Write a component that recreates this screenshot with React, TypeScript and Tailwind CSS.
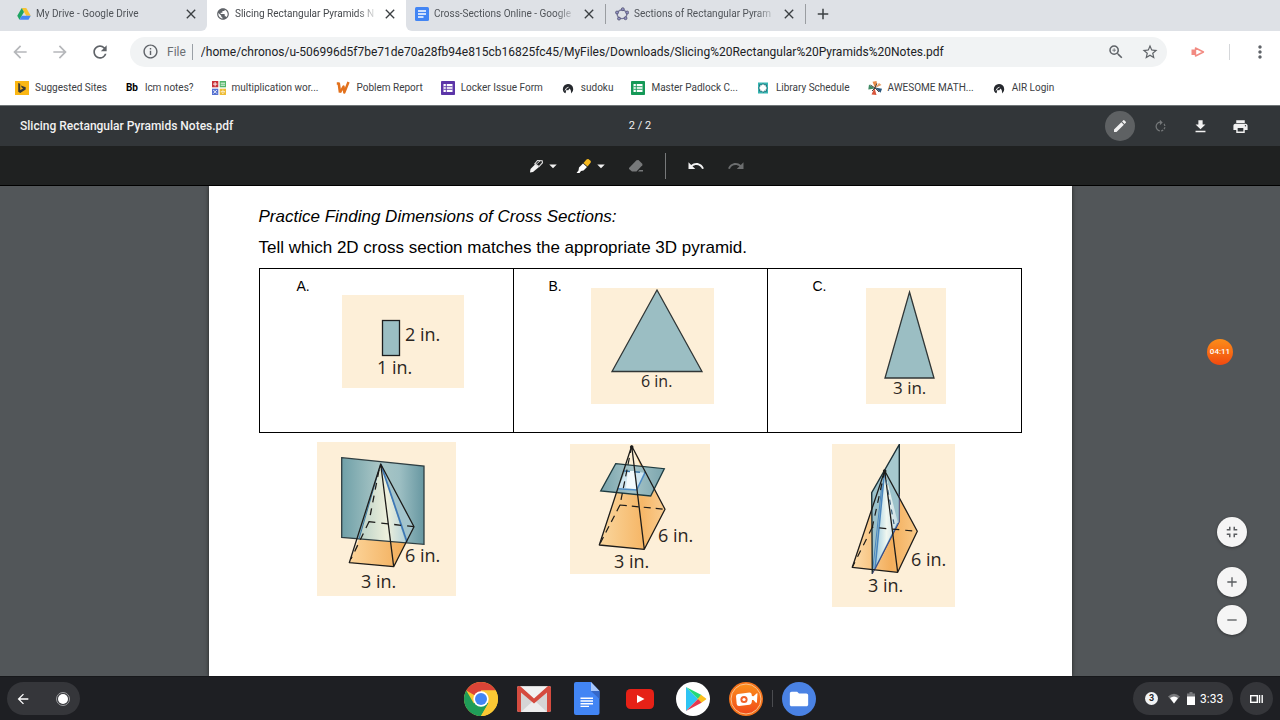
import React from 'react';
import {
  MdAdd,
  MdArrowBack,
  MdArrowDropDown,
  MdArrowForward,
  MdClose,
  MdEdit,
  MdFileDownload,
  MdFolder,
  MdFullscreenExit,
  MdInfoOutline,
  MdMoreVert,
  MdPrint,
  MdPublic,
  MdRedo,
  MdRefresh,
  MdRemove,
  MdRotateRight,
  MdStarBorder,
  MdUndo,
  MdZoomIn,
} from 'react-icons/md';

/* ---------- small logos ---------- */

const DriveLogo = () => (
  <svg className="w-3.5 h-3.5" viewBox="0 0 28 26">
    <path d="M9.5 1h9l9 15.500h-9z" fill="#f7c332" />
    <path d="M9.500 1 0.500 16.500l4.500 8L14 8.800z" fill="#1fa463" />
    <path d="M9.500 16.500h18l-4.500 8H5z" fill="#4687f4" />
  </svg>
);

const DocsLogo = () => (
  <svg className="w-3.5 h-3.5" viewBox="0 0 14 14">
    <rect width="14" height="14" rx="1.500" fill="#4285f4" />
    <path d="M3 4h8M3 7h8M3 10h5.500" stroke="#fff" strokeWidth="1.500" />
  </svg>
);

const GeogebraLogo = () => (
  <svg className="w-3.5 h-3.5" viewBox="0 0 14 14">
    <ellipse cx="7" cy="7.300" rx="4.800" ry="4.300" fill="none" stroke="#77779b" strokeWidth="1.400" />
    <g fill="#8f8fc0" stroke="#4a4a68" strokeWidth="0.700">
      <circle cx="7.800" cy="2.200" r="1.500" />
      <circle cx="12.200" cy="5.500" r="1.500" />
      <circle cx="10.500" cy="11.200" r="1.500" />
      <circle cx="4" cy="11.600" r="1.500" />
      <circle cx="2" cy="5.500" r="1.500" />
    </g>
  </svg>
);

const BingLogo = () => (
  <svg className="w-3.5 h-3.5" viewBox="0 0 14 14">
    <rect width="14" height="14" fill="#fbb713" />
    <path d="M3.200 2l2 .8v6.200l3-1.600-1.500-.8-.8-2 4.800 1.700v2.300L5.200 12l-2-1.300z" fill="#3b3a35" />
  </svg>
);

const OperationsLogo = () => (
  <svg className="w-3.5 h-3.5" viewBox="0 0 14 14">
    <rect width="6.300" height="6.300" fill="#c8323a" />
    <rect x="7.700" width="6.300" height="6.300" fill="#52b46a" />
    <rect y="7.700" width="6.300" height="6.300" fill="#5570d0" />
    <rect x="7.700" y="7.700" width="6.300" height="6.300" fill="#eebc35" />
    <path d="M3.100 1v4.300M1 3.100h4.300M8.700 2.200h4.300M8.700 4.200h4.300M1.300 9l3.600 3.600M4.900 9l-3.600 3.600M8.700 10.800h4.300M10.400 9.200h1M10.400 12.500h1" stroke="#fff" strokeWidth="0.900" />
  </svg>
);

const WLogo = () => (
  <svg className="w-3.5 h-3.5" viewBox="0 0 14 14" fill="none" stroke="#e2711d" strokeLinejoin="round">
    <path d="M.8 2.500h2L4 11.500" strokeWidth="2.600" />
    <path d="M4 11.500 7.500 5.500l.8 6L12.500 1" strokeWidth="2.400" />
  </svg>
);

const ListLogo = ({ color }: { color: string }) => (
  <svg className="w-3.5 h-3.5" viewBox="0 0 14 14">
    <rect width="14" height="14" rx="0.800" fill={color} />
    <rect x="2.500" y="3" width="9" height="8" fill="#fff" />
    <path d="M2.500 5.700h9M2.500 8.300h9M5.300 3v8" stroke={color} strokeWidth="0.900" />
  </svg>
);

const ArchLogo = () => (
  <svg className="w-3.5 h-3.5" viewBox="0 0 14 14">
    <path d="M3.300 11.800A5.200 5.200 0 1 1 10.900 11.600L10 12.500Q10.500 9 8.500 7.500L7 9.500 5.500 8.500 4.500 12.300z" fill="#26292e" />
    <path d="M4 9.500Q5 6.500 7.500 6.200" stroke="#fff" strokeWidth="0.900" fill="none" />
  </svg>
);

const LibraryLogo = () => (
  <svg className="w-3.5 h-3.5" viewBox="0 0 14 14">
    <rect x="2" y="1.500" width="10" height="11" fill="#35b5b2" />
    <path d="M7 2.500 8.500 4l2-.2-.2 2L11.500 7l-1.200 1.300.2 2-2-.2L7 11.500 5.500 10l-2 .2.200-2L2.500 7l1.200-1.300-.2-2 2 .3z" fill="#fff" stroke="#12656d" strokeWidth="0.900" />
  </svg>
);

const PinwheelLogo = () => (
  <svg className="w-3.5 h-3.5" viewBox="0 0 14 14">
    <path d="M7 7 4.500.8 8.500 0 9 3z" fill="#e88b4b" />
    <path d="M7 7l4-5 2.500 2z" fill="#e9a26c" />
    <path d="M7 6.500l7 1.200-1.500 4z" fill="#29567c" />
    <path d="M6.500 7l2 7-5-.5z" fill="#d8553b" />
    <path d="M7 7.500.3 8.500 1 3.500z" fill="#3f8a64" />
    <path d="M7 7 2.500 4M7 7l4 4M7 7l1.800-4.500M7 7l-3 3" stroke="#333" strokeWidth="0.900" />
  </svg>
);

/* ---------- browser chrome ---------- */

interface TabProps {
  icon: React.ReactNode;
  title: string;
  active?: boolean;
}

const Tab: React.FC<TabProps> = ({ icon, title, active }) => (
  <div className={`flex items-center flex-1 max-w-[199px] min-w-0 px-2 pb-[3px] ${active ? 'bg-white' : ''}`}>
    <span className="w-4 flex justify-center shrink-0">{icon}</span>
    <button
      className={`flex-1 min-w-0 ml-1 mr-1 overflow-hidden whitespace-nowrap text-left text-[10px] leading-4 mask-r-from-85% ${
        active ? 'text-[#45484c]' : 'text-[#505459]'
      }`}
    >
      {title}
    </button>
    <button aria-label="Close tab" className="shrink-0 text-[#3c4043]">
      <MdClose size={16} />
    </button>
  </div>
);

const TabStrip = () => (
  <div className="flex h-[31px] bg-white shrink-0">
    <div className="flex bg-[#dee1e6] rounded-br-md pl-2 flex-1 max-w-[207px]">
      <Tab icon={<DriveLogo />} title="My Drive - Google Drive" />
    </div>
    <Tab active icon={<MdPublic size={14} className="text-[#5f6368]" />} title="Slicing Rectangular Pyramids N" />
    <div className="flex flex-[4] bg-[#dee1e6] rounded-bl-md">
      <Tab icon={<DocsLogo />} title="Cross-Sections Online - Google" />
      <span className="w-px h-5 mt-1 bg-[#9a9da1]" />
      <Tab icon={<GeogebraLogo />} title="Sections of Rectangular Pyram" />
      <span className="w-px h-5 mt-1 bg-[#9a9da1]" />
      <button aria-label="New tab" className="px-2 pb-1 text-[#3c4043]">
        <MdAdd size={18} />
      </button>
    </div>
  </div>
);

const AddressBar = () => (
  <div className="flex items-center h-[41px] shrink-0 bg-white px-2.5 text-[#5f6368]">
    <div className="flex gap-5 mr-5">
      <button aria-label="Back" className="text-[#b5b7ba]"><MdArrowBack size={20} /></button>
      <button aria-label="Forward" className="text-[#b5b7ba]"><MdArrowForward size={20} /></button>
      <button aria-label="Reload"><MdRefresh size={20} /></button>
    </div>
    <div className="flex items-center flex-1 min-w-0 h-[30px] rounded-full bg-[#f1f3f4] pl-3 pr-2">
      <MdInfoOutline size={17} className="shrink-0" />
      <span className="ml-2 text-xs text-[#6b6f73]">File</span>
      <span className="w-px h-4 ml-1.5 mr-2 bg-[#9aa0a6]" />
      <input
        type="text"
        aria-label="Address"
        className="flex-1 min-w-0 bg-transparent text-xs text-[#202124] outline-none"
        defaultValue="/home/chronos/u-506996d5f7be71de70a28fb94e815cb16825fc45/MyFiles/Downloads/Slicing%20Rectangular%20Pyramids%20Notes.pdf"
      />
      <button aria-label="Zoom" className="ml-4"><MdZoomIn size={18} /></button>
      <button aria-label="Bookmark this page" className="ml-4"><MdStarBorder size={18} /></button>
    </div>
    <button aria-label="Screen recorder" className="ml-6">
      <svg width="14" height="14" viewBox="0 0 14 14" fill="none" stroke="#f28b82">
        <rect x="1" y="5" width="2.500" height="4.500" fill="#f28b82" />
        <path d="M4.500 3 12.500 7 4.500 11z" strokeWidth="1.400" strokeLinejoin="round" />
      </svg>
    </button>
    <span className="w-px h-4 ml-6 mr-5 bg-[#d5d7da]" />
    <button aria-label="Menu"><MdMoreVert size={20} /></button>
  </div>
);

const bookmarks = [
  { label: 'Suggested Sites', icon: <BingLogo /> },
  { label: 'lcm notes?', icon: <b className="text-[10px] leading-none text-black">Bb</b> },
  { label: 'multiplication wor...', icon: <OperationsLogo /> },
  { label: 'Poblem Report', icon: <WLogo /> },
  { label: 'Locker Issue Form', icon: <ListLogo color="#5c35a8" /> },
  { label: 'sudoku', icon: <ArchLogo /> },
  { label: 'Master Padlock C...', icon: <ListLogo color="#159957" /> },
  { label: 'Library Schedule', icon: <LibraryLogo /> },
  { label: 'AWESOME MATH...', icon: <PinwheelLogo /> },
  { label: 'AIR Login', icon: <ArchLogo /> },
];

const BookmarksBar = () => (
  <nav className="flex items-center gap-[18px] h-[33px] shrink-0 bg-white pl-[15px] pb-0.5 overflow-hidden">
    {bookmarks.map((b) => (
      <a key={b.label} href="#" className="flex items-center gap-1.5 whitespace-nowrap text-[10px] leading-4 text-[#3c4043]">
        <span className="w-3.5 flex justify-center">{b.icon}</span>
        {b.label}
      </a>
    ))}
  </nav>
);

/* ---------- PDF viewer ---------- */

const headerButton = 'w-10 h-[30px] flex items-center justify-center';

const PdfHeader = () => (
  <header className="grid grid-cols-3 items-center h-[41px] shrink-0 bg-[#323639] border-t border-[#6f7577] px-5 text-[#f1f1f1]">
    <h1 className="text-xs font-medium whitespace-nowrap">Slicing Rectangular Pyramids Notes.pdf</h1>
    <span className="text-[11px] text-center">2 / 2</span>
    <div className="flex items-center justify-end">
      <button aria-label="Annotate" className={headerButton}>
        <span className="w-[30px] h-[30px] rounded-full bg-[#5e6163] flex items-center justify-center">
          <MdEdit size={16} />
        </span>
      </button>
      <button aria-label="Rotate" className={`${headerButton} text-[#75787a]`}><MdRotateRight size={15} /></button>
      <button aria-label="Download" className={headerButton}><MdFileDownload size={17} /></button>
      <button aria-label="Print" className={headerButton}><MdPrint size={17} /></button>
    </div>
  </header>
);

const AnnotationBar = () => (
  <div className="flex items-center justify-center h-10 shrink-0 bg-[#1f2121] border-b border-black pr-1.5 text-[#f1f1f1]">
    <button aria-label="Pen" className="flex items-center">
      <svg width="15" height="14" viewBox="0 0 15 14">
        <path d="M1 13.500 1.500 10l5-5 3.500 3-6 5z" fill="#f4f4f4" />
        <path d="M5.800 4.800 8.500 1.500l4.700.2.300 2L10 7.500z" fill="#1f2121" stroke="#ddd" strokeWidth="1.100" />
        <path d="M7 5.500l4-3.500" stroke="#ddd" strokeWidth="0.900" />
      </svg>
      <MdArrowDropDown size={18} />
    </button>
    <button aria-label="Highlighter" className="flex items-center ml-3.5">
      <svg width="16" height="16" viewBox="0 0 16 16">
        <path d="M7.500 5 10.500 1.500q.8-.8 1.800-.5l2.200 1.800q.8.900.100 1.900L11.500 8.500z" fill="#f5b921" />
        <path d="M7 5.600 11 9 7.500 12.500 5 13 3.500 15H.5l2-2.500L3 9.500z" fill="#fff" />
      </svg>
      <MdArrowDropDown size={18} />
    </button>
    <button aria-label="Eraser" className="ml-[18px]">
      <svg width="16" height="16" viewBox="0 0 16 16" fill="#77797a">
        <path d="M1 10 8.500 2.200 10.500 2l4 4-.2 1.300L8.500 13.500H4L1 11z" />
        <path d="M10 13.500 11.500 12h3.500v1.500z" />
      </svg>
    </button>
    <span className="w-px h-[26px] mx-[21px] bg-[#77797a]" />
    <button aria-label="Undo"><MdUndo size={18} /></button>
    <button aria-label="Redo" className="ml-[22px] text-[#6c6e6f]"><MdRedo size={18} /></button>
  </div>
);

const labelClass = "font-['Open_Sans',sans-serif] text-[18px] fill-[#2b2622]";

const RectangleFigure = () => (
  <svg width="122" height="93" viewBox="0 0 122 93" className="bg-[#fdefd8]">
    <rect x="40.500" y="25.500" width="17" height="35" fill="#9bbec3" stroke="#1d1d1d" strokeWidth="1.300" />
    <text x="63" y="46" className={labelClass}>2 in.</text>
    <text x="35" y="79" className={labelClass}>1 in.</text>
  </svg>
);

const WideTriangleFigure = () => (
  <svg width="123" height="116" viewBox="0 0 123 116" className="bg-[#fdefd8]">
    <path d="M66 2 111 83.500H21z" fill="#9bbec3" stroke="#303636" strokeWidth="1.300" />
    <text x="50" y="99" className="font-['Open_Sans',sans-serif] text-[16px] fill-[#2b2622]">6 in.</text>
  </svg>
);

const NarrowTriangleFigure = () => (
  <svg width="80" height="116" viewBox="0 0 80 116" className="bg-[#fdefd8]">
    <path d="M43.500 4 68 90H19z" fill="#9bbec3" stroke="#303636" strokeWidth="1.300" />
    <text x="27" y="106" className="font-['Open_Sans',sans-serif] text-[17px] fill-[#2b2622]">3 in.</text>
  </svg>
);

// Plane parallel to the front edge, through the apex
const VerticalSlicePyramid = () => (
  <svg width="139" height="154" viewBox="0 0 139 154" className="bg-[#fdefd8]">
    <defs>
      <linearGradient id="plane1">
        <stop offset="0" stopColor="#6fa0a8" />
        <stop offset="0.450" stopColor="#a9c6c6" />
        <stop offset="0.700" stopColor="#9dbfc3" />
        <stop offset="1" stopColor="#6797a1" />
      </linearGradient>
      <linearGradient id="orange1">
        <stop offset="0" stopColor="#fcd59b" />
        <stop offset="1" stopColor="#f2ac58" />
      </linearGradient>
      <linearGradient id="pale1">
        <stop offset="0" stopColor="#b9d0c6" />
        <stop offset="0.600" stopColor="#eef0dc" />
        <stop offset="1" stopColor="#b5d2da" />
      </linearGradient>
    </defs>
    <path d="M24.700 15.700 107 24v78.300L24.700 95.300z" fill="url(#plane1)" />
    <path d="M63.700 22 42 97l47 4z" fill="url(#pale1)" />
    <path d="M63.700 22 89 101l8-16z" fill="#a3c4cc" />
    <path d="M42 97 32.300 120.700l44.400 4L89 101z" fill="url(#orange1)" />
    <path d="M24.700 15.700 107 24v78.300L24.700 95.300z" fill="none" stroke="#2f3e42" strokeWidth="1.300" />
    <path d="M63.700 22 90 100" stroke="#3d77b5" strokeWidth="1.700" />
    <path d="M63.700 22 42 97" stroke="#3b76a0" strokeWidth="1" />
    <path d="M63.700 22 32.300 120.700l44.400 4L97 84.700zL76.700 124.700" fill="none" stroke="#1d1c1a" strokeWidth="1.300" strokeLinejoin="round" />
    <path d="M62 28 52 79.700 97 84.700M52 79.700 34 117" fill="none" stroke="#1d1c1a" strokeWidth="1.300" strokeDasharray="7 6" />
    <text x="88" y="120" className={labelClass}>6 in.</text>
    <text x="44" y="146" className={labelClass}>3 in.</text>
  </svg>
);

// Plane parallel to the base
const HorizontalSlicePyramid = () => (
  <svg width="140" height="130" viewBox="0 0 140 130" className="bg-[#fdefd8]">
    <defs>
      <linearGradient id="plane2">
        <stop offset="0" stopColor="#7ba5ad" />
        <stop offset="0.500" stopColor="#a4c3c7" />
        <stop offset="1" stopColor="#7ba5ad" />
      </linearGradient>
      <linearGradient id="orange2">
        <stop offset="0" stopColor="#fad79f" />
        <stop offset="0.650" stopColor="#f6b768" />
        <stop offset="1" stopColor="#f9cd91" />
      </linearGradient>
    </defs>
    <path d="M61.700 2 29.300 101l45 4.300L95 65.300z" fill="url(#orange2)" />
    <path d="M61.700 2 54 22l17 1z" fill="#fdf0d4" />
    <path d="M45.700 19.700 94.300 24.700 80.700 52l-50-5z" fill="url(#plane2)" stroke="#1e3b40" strokeWidth="1.300" />
    <path d="M55.700 26.700 75 28.700 66.700 46 48 44.700z" fill="#cfe6f0" />
    <path d="M58 27 56 44l10 1-2-18z" fill="#f3fafc" />
    <path d="M75 28.700 66.700 46 48 44.700" fill="none" stroke="#4f8cc4" strokeWidth="1.600" />
    <path d="M54 27 76 28.700" stroke="#3c77a8" strokeWidth="1.400" strokeDasharray="6 4" />
    <path d="M61.700 2 29.300 101l45 4.300L95 65.300zL74.300 105.300" fill="none" stroke="#1d1c1a" strokeWidth="1.300" strokeLinejoin="round" />
    <path d="M61.700 2 50 61l45 4.300M50 61 29.300 101" fill="none" stroke="#1d1c1a" strokeWidth="1.200" strokeDasharray="7 5" />
    <circle cx="61.700" cy="3" r="1.800" fill="#1d1c1a" />
    <text x="88" y="98" className={labelClass}>6 in.</text>
    <text x="44" y="124" className={labelClass}>3 in.</text>
  </svg>
);

// Plane along the length of the base, through the apex
const DepthSlicePyramid = () => (
  <svg width="123" height="163" viewBox="0 0 123 163" className="bg-[#fdefd8]">
    <defs>
      <linearGradient id="orange3">
        <stop offset="0" stopColor="#fdddac" />
        <stop offset="0.600" stopColor="#f3ae5c" />
        <stop offset="1" stopColor="#f9c987" />
      </linearGradient>
      <linearGradient id="pale3">
        <stop offset="0" stopColor="#9ccbe0" />
        <stop offset="0.500" stopColor="#f0f7f0" />
        <stop offset="1" stopColor="#c5dbe4" />
      </linearGradient>
    </defs>
    <path d="M52.700 26.700 20.300 123.300l45.400 5L85.300 87.300z" fill="url(#orange3)" />
    <path d="M67.300.500v77.200L40.300 130 39.700 48.700z" fill="#9cc2cb" />
    <path d="M67.300.500 53 26.700l14.300 24z" fill="#a6c9cf" />
    <path d="M52.700 26.700 43 125 66 79z" fill="url(#pale3)" />
    <path d="M52.700 26.700 43 125 66 79" fill="none" stroke="#4a86be" strokeWidth="1.500" />
    <path d="M50 40 40.500 128" stroke="#4a86be" strokeWidth="1" />
    <path d="M67.300 52V.500L39.700 48.700 40.300 130" fill="none" stroke="#1e3238" strokeWidth="1.400" />
    <path d="M67.300 50v28L40.300 130" fill="none" stroke="#447" strokeWidth="1" />
    <path d="M52.700 26.700 20.300 123.300l45.400 5L85.300 87.300zL65.700 128.300" fill="none" stroke="#1d1c1a" strokeWidth="1.300" strokeLinejoin="round" />
    <path d="M52.700 26.700 40.300 83.300l45 4M40.300 83.300l-20 40" fill="none" stroke="#1d1c1a" strokeWidth="1.200" strokeDasharray="7 6" />
    <path d="M54 36 62 80" stroke="#3b5f7c" strokeWidth="1.200" strokeDasharray="5 5" />
    <circle cx="52.700" cy="27" r="1.800" fill="#1d1c1a" />
    <text x="79" y="122" className={labelClass}>6 in.</text>
    <text x="36" y="148" className={labelClass}>3 in.</text>
  </svg>
);

const Page = () => (
  <article className="w-full max-w-[863px] mx-auto min-h-full bg-white px-[50px] pt-5 font-['Liberation_Sans',Arial,sans-serif] text-[17px] leading-[22px] text-black shadow-[0_0_4px_#222]">
    <h2 className="italic">Practice Finding Dimensions of Cross Sections:</h2>
    <p className="mt-[9px]">Tell which 2D cross section matches the appropriate 3D pyramid.</p>
    <table className="w-full mt-[9px] table-fixed border-collapse text-[14px] leading-5">
      <tbody>
        <tr className="h-[164px] align-top">
          <td className="border border-black pl-[37px] pt-[7px]">
            <div className="flex gap-8">
              <span>A.</span>
              <div className="pt-[19px]"><RectangleFigure /></div>
            </div>
          </td>
          <td className="border border-black pl-[35px] pt-[7px]">
            <div className="flex gap-[29px]">
              <span>B.</span>
              <div className="pt-3"><WideTriangleFigure /></div>
            </div>
          </td>
          <td className="border border-black pl-[45px] pt-[7px]">
            <div className="flex gap-[39px]">
              <span>C.</span>
              <div className="pt-3"><NarrowTriangleFigure /></div>
            </div>
          </td>
        </tr>
      </tbody>
    </table>
    <div className="grid grid-cols-3 items-start pt-[9px]">
      <div className="pl-[58px]"><VerticalSlicePyramid /></div>
      <div className="pl-[57px] pt-0.5"><HorizontalSlicePyramid /></div>
      <div className="pl-[65px] pt-0.5"><DepthSlicePyramid /></div>
    </div>
  </article>
);

const zoomButton =
  'w-[30px] h-[30px] rounded-full bg-[#f5f5f5] text-[#5a5d60] flex items-center justify-center shadow-[0_1px_3px_rgba(0,0,0,0.4)]';

const Viewer = () => (
  <main className="relative flex-1 min-h-0 overflow-hidden bg-[#525659]">
    <Page />
    <div className="absolute top-[153px] right-[47px] w-[26px] h-[26px] rounded-full bg-gradient-to-b from-[#fb8c1a] to-[#f1480f] flex items-center justify-center text-[8px] font-medium text-white">
      04:11
    </div>
    <div className="absolute right-[33px] bottom-[41px] flex flex-col">
      <button aria-label="Fit to page" className={zoomButton}><MdFullscreenExit size={18} /></button>
      <button aria-label="Zoom in" className={`${zoomButton} mt-5`}><MdAdd size={16} /></button>
      <button aria-label="Zoom out" className={`${zoomButton} mt-2`}><MdRemove size={16} /></button>
    </div>
  </main>
);

/* ---------- shelf ---------- */

const ChromeApp = () => (
  <svg width="34" height="34" viewBox="0 0 34 34">
    <circle cx="17" cy="17" r="17" fill="#fbc834" />
    <path d="M17 17 2.300 8.500A17 17 0 0 1 31.700 8.500H17z" fill="#db4437" />
    <path d="M2.300 8.500A17 17 0 0 0 17 34l7.400-12.700L17 17 9.700 21.300z" fill="#1f9d58" />
    <path d="M17 8.500h14.700A17 17 0 0 1 17 34l7.400-12.700z" fill="#fbc834" />
    <circle cx="17" cy="17" r="7.700" fill="#fff" />
    <circle cx="17" cy="17" r="6" fill="#4285f4" />
  </svg>
);

const GmailApp = () => (
  <svg width="34" height="26" viewBox="0 0 34 26">
    <rect width="34" height="26" rx="2" fill="#d5d5d5" />
    <path d="M4 26 17 14l13 12z" fill="#ededed" />
    <path d="M4 1h26L17 13z" fill="#f1f1f1" />
    <path d="M0 2q0-2 2-2h1l14 12.500L31 0h1q2 0 2 2v22q0 2-2 2h-2V6.500L17 17.500 4 6.500V26H2q-2 0-2-2z" fill="#d54b3f" />
  </svg>
);

const DocsApp = () => (
  <svg width="26" height="33" viewBox="0 0 26 33">
    <path d="M2 0h15l8.500 9v22q0 2-2 2H2q-2 0-2-2V2q0-2 2-2z" fill="#4285f4" />
    <path d="M17 0l8.500 9H17z" fill="#a8c7fa" />
    <path d="M17 9h8.500v8z" fill="#3568c8" />
    <path d="M6.500 16.300h12.500M6.500 19h12.500M6.500 21.700h12.500M6.500 24.400h8.500" stroke="#fff" strokeWidth="1.400" />
  </svg>
);

const YoutubeApp = () => (
  <svg width="28" height="20" viewBox="0 0 28 20">
    <rect width="28" height="20" rx="4.500" fill="#e62117" />
    <path d="M11 6l7.500 4L11 14z" fill="#fff" />
  </svg>
);

const PlayApp = () => (
  <svg width="34" height="34" viewBox="0 0 34 34">
    <circle cx="17" cy="17" r="17" fill="#fff" />
    <path d="M10 5v24l12-12z" fill="#2ec4f3" />
    <path d="M10 5 22 17l3.500-4z" fill="#25d978" />
    <path d="M25 12.700 21.500 17l3.500 4 5-3.500q.7-.6 0-1z" fill="#fbbf1e" />
    <path d="M10 29l12-12 3.500 3.800z" fill="#e5394f" />
  </svg>
);

const RecorderApp = () => (
  <svg width="34" height="34" viewBox="0 0 34 34">
    <defs>
      <linearGradient id="recorder" x2="0" y2="1">
        <stop offset="0" stopColor="#fb8f1c" />
        <stop offset="1" stopColor="#f14a1a" />
      </linearGradient>
    </defs>
    <circle cx="17" cy="17" r="17" fill="#f4731c" />
    <circle cx="17" cy="17" r="15" fill="url(#recorder)" stroke="#fbc08a" strokeWidth="1" />
    <path d="M9 12l11.500-1.500q2 0 2.200 2l.2 1.500 1.600.3 3-2.800 1-.2-.6 9.500-1-.1-2.500-2.700-1.400.1-.3 2.400q-.3 2-2.200 2.200L10 24q-2 .1-2.300-1.900L7 14.200Q7 12.200 9 12z" fill="#fff" />
    <circle cx="15" cy="17.500" r="3.600" fill="#f2622a" />
    <circle cx="15" cy="17.500" r="1.600" fill="#fff" />
  </svg>
);

const FilesApp = () => (
  <span className="w-[34px] h-[34px] rounded-full bg-[#4a82e4] flex items-center justify-center text-white">
    <MdFolder size={22} />
  </span>
);

const apps = [
  { name: 'Chrome', icon: <ChromeApp /> },
  { name: 'Gmail', icon: <GmailApp /> },
  { name: 'Docs', icon: <DocsApp /> },
  { name: 'YouTube', icon: <YoutubeApp /> },
  { name: 'Play Store', icon: <PlayApp /> },
  { name: 'Screen Recorder', icon: <RecorderApp /> },
  { name: 'Files', icon: <FilesApp /> },
];

const Shelf = () => (
  <footer className="grid grid-cols-[1fr_auto_1fr] items-center h-11 shrink-0 bg-[#1e1f23] border-t border-[#17181b] px-[7px] text-white">
    <div className="flex items-center justify-between w-[73px] h-[33px] rounded-full bg-[#35363a] pl-2 pr-2.5">
      <button aria-label="Back"><MdArrowBack size={16} /></button>
      <button aria-label="Launcher" className="w-3.5 h-3.5 rounded-full border border-[#9a9b9e] flex items-center justify-center">
        <span className="w-2.5 h-2.5 rounded-full bg-white" />
      </button>
    </div>
    <div className="flex items-center gap-[19px]">
      {apps.map((app) => (
        <React.Fragment key={app.name}>
          {app.name === 'Files' && <span className="w-px h-[17px] -mx-2.5 bg-[#4b4c50]" />}
          <button aria-label={app.name} className="w-[34px] h-[34px] flex items-center justify-center">{app.icon}</button>
        </React.Fragment>
      ))}
    </div>
    <div className="flex items-center justify-end gap-[7px]">
      <button className="flex items-center w-[100px] h-[33px] rounded-full bg-[#35363a] pl-3 text-xs">
        <span className="w-[13px] h-[13px] rounded-full bg-[#f1f3f4] text-[#26272b] text-[9px] leading-[13px] font-bold">3</span>
        <svg className="ml-2.5" width="12" height="11" viewBox="0 0 12 11">
          <path d="M0 3.500Q6-2 12 3.500L6 10.500z" fill="#78797c" />
          <path d="M2 5Q6 2 10 5L6 10.500z" fill="#fff" />
        </svg>
        <svg className="ml-[7px]" width="8" height="13" viewBox="0 0 8 13">
          <path d="M2.500 0h3v1.500H8V6H0V1.500h2.500z" fill="#78797c" />
          <rect y="4.500" width="8" height="8.500" fill="#fff" />
        </svg>
        <span className="ml-[5px]">3:33</span>
      </button>
      <button aria-label="Overview" className="w-[33px] h-[33px] rounded-full bg-[#35363a] flex items-center justify-center">
        <svg width="13" height="8" viewBox="0 0 13 8" fill="none" stroke="#fff" strokeWidth="1.400">
          <rect x="0.700" y="0.700" width="6.600" height="6.600" />
          <path d="M9.500 0v8M12.200 0v8" />
        </svg>
      </button>
    </div>
  </footer>
);

const App: React.FC = () => {
  return (
    <div className="h-screen flex flex-col overflow-hidden font-['Roboto',sans-serif]">
      <TabStrip />
      <AddressBar />
      <BookmarksBar />
      <PdfHeader />
      <AnnotationBar />
      <Viewer />
      <Shelf />
    </div>
  );
};

export default App;
